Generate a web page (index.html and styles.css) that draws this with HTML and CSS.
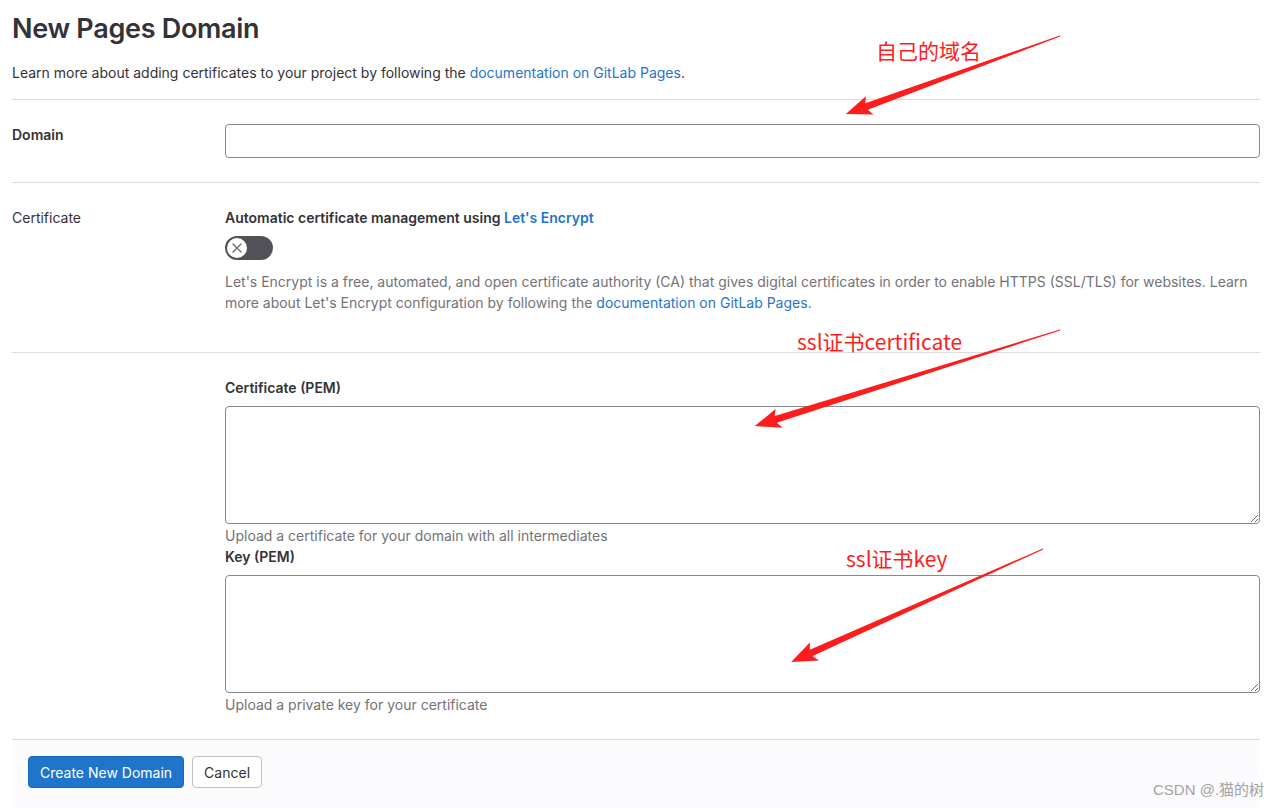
FILE: index.html
```html
<!DOCTYPE html>
<html lang="en">
<head>
<meta charset="utf-8">
<title>New Pages Domain</title>
<link rel="stylesheet" href="styles.css">
</head>
<body>
<div class="page">
  <h1 class="title">New Pages Domain</h1>
  <p class="intro">Learn more about adding certificates to your project by following the <a href="#">documentation on GitLab Pages</a>.</p>

  <div class="row">
    <div class="row-label strong">Domain</div>
    <div class="row-body">
      <input class="text-input" type="text">
    </div>
  </div>

  <div class="row">
    <div class="row-label">Certificate</div>
    <div class="row-body">
      <div class="field-label">Automatic certificate management using <a href="#">Let's Encrypt</a></div>
      <div class="toggle">
        <span class="knob">
          <svg width="12" height="12" viewBox="0 0 12 12"><path d="M2 2 L10 10 M10 2 L2 10" stroke="#737278" stroke-width="1.5" stroke-linecap="round"/></svg>
        </span>
      </div>
      <p class="help">Let's Encrypt is a free, automated, and open certificate authority (CA) that gives digital certificates in order to enable HTTPS (SSL/TLS) for websites. Learn more about Let's Encrypt configuration by following the <a href="#">documentation on GitLab Pages</a>.</p>
    </div>
  </div>

  <div class="row last">
    <div class="row-label"></div>
    <div class="row-body">
      <div class="field-label">Certificate (PEM)</div>
      <textarea class="area"></textarea>
      <div class="hint">Upload a certificate for your domain with all intermediates</div>
      <div class="field-label">Key (PEM)</div>
      <textarea class="area"></textarea>
      <div class="hint">Upload a private key for your certificate</div>
    </div>
  </div>

  <div class="actions">
    <button class="btn primary">Create New Domain</button>
    <button class="btn">Cancel</button>
  </div>
</div>

<svg class="marks" width="1280" height="808" viewBox="0 0 1280 808">
  <g fill="#fe1d1d">
    <polygon transform="translate(1060,36) rotate(159.97)" points="0,-0.5 206,-3.5 202,-10 228,0 203,10 206,3.5 0,0.5"/>
    <polygon transform="translate(1060,330) rotate(162.53)" points="0,-0.5 298,-3.5 294,-10 320,0 295,10 298,3.5 0,0.5"/>
    <polygon transform="translate(1043,549) rotate(155.85)" points="0,-0.5 254,-3.5 250,-10 276,0 251,10 254,3.5 0,0.5"/>
  </g>
</svg>
<span class="note note1">自己的域名</span>
<span class="note note2">ssl证书certificate</span>
<span class="note note3">ssl证书key</span>
<span class="watermark">CSDN @.猫的树</span>
</body>
</html>
```
FILE: styles.css
```css
* { box-sizing: border-box; }
html, body { margin: 0; padding: 0; }
body {
  background: #fff;
  font-family: Inter, "Noto Sans", "Liberation Sans", sans-serif;
  font-size: 14px;
  color: #333238;
  width: 1280px;
  height: 808px;
  overflow: hidden;
  position: relative;
}
a { color: #1f75cb; text-decoration: none; }

.page {
  padding: 11px 20px 0 12px;
}
.title {
  margin: 0;
  font-size: 27px;
  line-height: 36px;
  font-weight: 600;
  color: #333238;
  letter-spacing: -0.3px;
}
.intro {
  margin: 16px 0 0;
  line-height: 20px;
  padding-bottom: 16px;
  border-bottom: 1px solid #dcdcde;
}
.row {
  display: flex;
  padding: 24px 0;
  border-bottom: 1px solid #dcdcde;
}
.row.last { border-bottom: none; }
.row-label {
  width: 213px;
  flex: none;
  line-height: 22px;
}
.strong { font-weight: 600; }
.row-body { flex: 1; min-width: 0; }
.text-input {
  display: block;
  width: 100%;
  height: 34px;
  border: 1px solid #89888d;
  border-radius: 4px;
  font: inherit;
  padding: 0 12px;
}
.field-label {
  font-weight: 600;
  line-height: 22px;
}
.toggle {
  margin-top: 7px;
  width: 48px;
  height: 24px;
  border-radius: 12px;
  background: #535158;
  position: relative;
}
.knob {
  position: absolute;
  left: 2px;
  top: 2px;
  width: 20px;
  height: 20px;
  border-radius: 50%;
  background: #fff;
  display: flex;
  align-items: center;
  justify-content: center;
}
.help {
  margin: 11px 0 15px;
  color: #737278;
  line-height: 21px;
}
.area {
  display: block;
  width: 100%;
  height: 118px;
  margin-top: 7px;
  border: 1px solid #89888d;
  border-radius: 4px;
  font: inherit;
  padding: 8px 12px;
}
.hint {
  color: #737278;
  line-height: 20px;
  margin-top: 2px;
}
.actions {
  border-top: 1px solid #dcdcde;
  background: #fbfafd;
  padding: 16px;
  height: 80px;
  display: flex;
  gap: 8px;
  align-items: flex-start;
}
.btn {
  height: 32px;
  padding: 0 11px;
  border: 1px solid #bfbfc3;
  border-radius: 4px;
  background: #fff;
  color: #333238;
  font: inherit;
  font-size: 14px;
  white-space: nowrap;
}
.btn.primary {
  background: #1f75cb;
  border-color: #1068bf;
  color: #fff;
}

.marks {
  position: absolute;
  left: 0;
  top: 0;
  pointer-events: none;
}
.note {
  position: absolute;
  font-family: "Noto Sans CJK SC", "Noto Sans", sans-serif;
  font-size: 21px;
  line-height: 24px;
  color: #fe1d1d;
  white-space: nowrap;
}
.note1 { left: 876px; top: 38px; }
.note2 { left: 797px; top: 329px; }
.note3 { left: 846px; top: 546px; }
.watermark {
  position: absolute;
  left: 1153px;
  top: 780px;
  font-family: "Liberation Sans", "Noto Sans CJK SC", sans-serif;
  font-size: 15px;
  line-height: 20px;
  color: #a3a3a3;
  white-space: nowrap;
}
```
